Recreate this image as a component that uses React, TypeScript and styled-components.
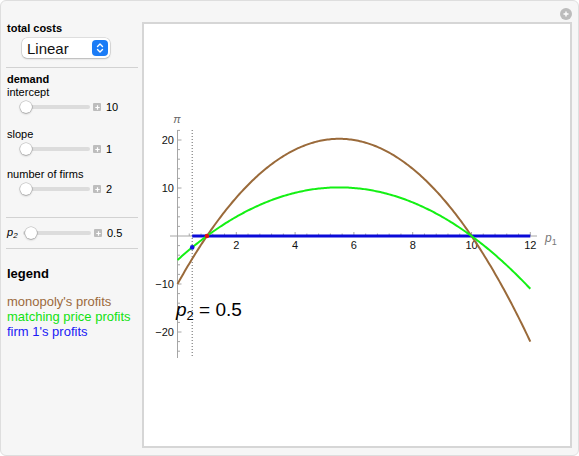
import styled, { createGlobalStyle } from 'styled-components';

const GlobalStyle = createGlobalStyle`
  html, body {
    margin: 0;
    padding: 0;
    background: #ffffff;
  }
  body {
    font-family: 'Liberation Sans', Arial, sans-serif;
  }
`;

const Frame = styled.div`
  position: relative;
  box-sizing: border-box;
  width: 579px;
  height: 456px;
  display: flex;
  align-items: flex-start;
  padding: 21px 0 0 5px;
  border: 1px solid #dedede;
  border-radius: 6px;
  background: #f6f6f6;
`;

const Sidebar = styled.div`
  width: 132px;
  display: flex;
  flex-direction: column;
  color: #000;
`;

const ControlTitle = styled.div<{ $size?: number; $gap?: number }>`
  font-weight: bold;
  font-size: ${(p) => p.$size ?? 11}px;
  line-height: ${(p) => (p.$size ? p.$size + 3 : 13)}px;
  margin-top: ${(p) => p.$gap ?? 0}px;
  padding-left: 1px;
`;

const ControlLabel = styled.div<{ $gap?: number }>`
  font-size: 11px;
  line-height: 13px;
  margin-top: ${(p) => p.$gap ?? 0}px;
  padding-left: 1px;
`;

const Popup = styled.div`
  margin: 3px 0 0 16px;
  width: 88px;
  height: 20px;
  box-sizing: border-box;
  display: flex;
  align-items: center;
  justify-content: space-between;
  padding: 0 2px 0 5px;
  background: #fff;
  border-radius: 5px;
  box-shadow: 0 0 0 0.5px rgba(0, 0, 0, 0.18), 0 1px 2px rgba(0, 0, 0, 0.18);
  font-size: 15px;
  color: #111;
`;

const Stepper = styled.div`
  width: 16px;
  height: 16px;
  border-radius: 4px;
  background: #1b7cf6;
  display: flex;
  align-items: center;
  justify-content: center;
`;

const Divider = styled.div<{ $gap: number }>`
  height: 1px;
  margin-top: ${(p) => p.$gap}px;
  background: #d2d2d2;
`;

const SliderRow = styled.div<{ $indent?: number; $gap?: number }>`
  height: 16px;
  display: flex;
  align-items: center;
  margin-top: ${(p) => p.$gap ?? 0}px;
  padding-left: ${(p) => p.$indent ?? 14}px;
  font-size: 11px;
`;

const RowSymbol = styled.span`
  width: 16px;
  padding-left: 1px;
  font-style: italic;
  font-size: 11px;
  sub {
    font-size: 8px;
    vertical-align: -2px;
  }
`;

const Track = styled.div<{ $width: number }>`
  position: relative;
  width: ${(p) => p.$width}px;
  height: 4px;
  border-radius: 2px;
  background: #dcdcdc;
`;

const Thumb = styled.div`
  position: absolute;
  top: -4px;
  width: 12px;
  height: 12px;
  box-sizing: border-box;
  border-radius: 50%;
  background: #fff;
  box-shadow: 0 0 0 0.5px rgba(0, 0, 0, 0.25), 0 1px 2px rgba(0, 0, 0, 0.25);
`;

const PlusBox = styled.div`
  width: 8px;
  height: 8px;
  margin-left: 3px;
  border-radius: 1px;
  background: #bdbdbd;
  display: flex;
  align-items: center;
  justify-content: center;
`;

const Value = styled.span`
  margin-left: 5px;
  font-size: 11px;
`;

const LegendItem = styled.div<{ $color: string; $gap?: number }>`
  font-size: 13px;
  line-height: 15px;
  padding-left: 1px;
  margin-top: ${(p) => p.$gap ?? 0}px;
  color: ${(p) => p.$color};
`;

const PlotPanel = styled.div`
  margin-left: 4px;
  width: 430px;
  height: 426px;
  box-sizing: border-box;
  border: 2px solid #d6d6d6;
  background: #fff;
  svg {
    display: block;
  }
`;

const CornerButton = styled.div`
  position: absolute;
  top: 7px;
  right: 6px;
  width: 12px;
  height: 12px;
  border-radius: 50%;
  background: #bcbcbc;
  display: flex;
  align-items: center;
  justify-content: center;
`;

const PlusGlyph = ({ size, color }: { size: number; color: string }) => (
  <svg width={size} height={size} viewBox="0 0 8 8">
    <path d="M4 1.5v5M1.5 4h5" stroke={color} strokeWidth="1.4" />
  </svg>
);

const Slider = ({
  value,
  indent,
  width = 70,
  pct,
  gap,
  symbol,
}: {
  value: string;
  indent?: number;
  width?: number;
  pct: number;
  gap?: number;
  symbol?: boolean;
}) => (
  <SliderRow $indent={indent} $gap={gap}>
    {symbol && (
      <RowSymbol>
        p<sub>2</sub>
      </RowSymbol>
    )}
    <Track $width={width}>
      <Thumb style={{ left: pct * (width - 12) }} />
    </Track>
    <PlusBox>
      <PlusGlyph size={7} color="#fff" />
    </PlusBox>
    <Value>{value}</Value>
  </SliderRow>
);

// plot mapping (page coordinates)
const X = (p: number) => 177.5 + p * 29.4;
const Y = (v: number) => 236 - v * 4.8;

const curve = (f: (p: number) => number) => {
  const pts: string[] = [];
  for (let i = 0; i <= 240; i++) {
    const p = i / 20;
    pts.push(`${X(p).toFixed(2)},${Y(f(p)).toFixed(2)}`);
  }
  return 'M' + pts.join('L');
};

const monopoly = (p: number) => (p - 1) * (10 - p);
const matching = (p: number) => monopoly(p) / 2;

const Chart = () => {
  const xMinor: number[] = [];
  for (let i = 1; i <= 30; i++) if (i % 5 !== 0) xMinor.push(i * 0.4);
  const yMinor: number[] = [];
  for (let v = -24; v <= 22; v += 2) if (v % 10 !== 0) yMinor.push(v);
  const axis = '#a6a6a6';
  return (
    <svg width={426} height={422} viewBox="144 24 426 422" fontFamily="'Liberation Sans', Arial, sans-serif">
      {/* axes */}
      <line x1={170} y1={236} x2={537} y2={236} stroke={axis} strokeWidth={1} />
      <line x1={177.5} y1={130} x2={177.5} y2={358} stroke={axis} strokeWidth={1} />
      {xMinor.map((p) => (
        <line key={`xm${p}`} x1={X(p)} y1={236} x2={X(p)} y2={233.5} stroke={axis} />
      ))}
      {[2, 4, 6, 8, 10, 12].map((p) => (
        <g key={`xM${p}`}>
          <line x1={X(p)} y1={236} x2={X(p)} y2={232} stroke={axis} />
          <text x={X(p)} y={249} fontSize={11} textAnchor="middle" fill="#111">
            {p}
          </text>
        </g>
      ))}
      {yMinor.map((v) => (
        <line key={`ym${v}`} x1={177.5} y1={Y(v)} x2={180} y2={Y(v)} stroke={axis} />
      ))}
      {[-20, -10, 10, 20].map((v) => (
        <g key={`yM${v}`}>
          <line x1={177.5} y1={Y(v)} x2={181.5} y2={Y(v)} stroke={axis} />
          <text x={174} y={Y(v) + 4} fontSize={11} textAnchor="end" fill="#111">
            {v < 0 ? `\u2212${-v}` : v}
          </text>
        </g>
      ))}
      <text x={177} y={123} fontSize={11} fontStyle="italic" textAnchor="middle" fill="#666">
        π
      </text>
      <text x={545} y={242} fontSize={12} fontStyle="italic" fill="#777">
        p
        <tspan fontSize={9} dy={3} fontStyle="normal">
          1
        </tspan>
      </text>

      {/* price marker */}
      <line x1={X(0.5)} y1={130} x2={X(0.5)} y2={358} stroke="#666" strokeWidth={1} strokeDasharray="1 2" />

      {/* curves */}
      <line x1={X(0.5)} y1={236} x2={X(12)} y2={236} stroke="#0a0ad8" strokeWidth={3} />
      <path d={curve(monopoly)} fill="none" stroke="#9a6a3a" strokeWidth={2} />
      <path d={curve(matching)} fill="none" stroke="#14f014" strokeWidth={2} />
      <circle cx={X(0.5)} cy={Y(matching(0.5))} r={2.3} fill="#1010e0" />
      <circle cx={X(1)} cy={Y(0)} r={2.3} fill="#e01010" />

      <text x={176} y={316} fontSize={19} fill="#000">
        <tspan fontStyle="italic">p</tspan>
        <tspan fontSize={13} dy={4}>
          2
        </tspan>
        <tspan dy={-4}> = 0.5</tspan>
      </text>
    </svg>
  );
};

export default function App() {
  return (
    <>
      <GlobalStyle />
      <Frame>
        <Sidebar>
          <ControlTitle>total costs</ControlTitle>
          <Popup>
            <span>Linear</span>
            <Stepper>
              <svg width="10" height="12" viewBox="0 0 10 12">
                <path d="M2.5 4.5L5 2l2.5 2.5M2.5 7.5L5 10l2.5-2.5" fill="none" stroke="#fff" strokeWidth="1.4" strokeLinecap="round" strokeLinejoin="round" />
              </svg>
            </Stepper>
          </Popup>
          <Divider $gap={9} />
          <ControlTitle $gap={5}>demand</ControlTitle>
          <ControlLabel>intercept</ControlLabel>
          <Slider value="10" pct={0} />
          <ControlLabel $gap={13}>slope</ControlLabel>
          <Slider value="1" pct={0} />
          <ControlLabel $gap={11}>number of firms</ControlLabel>
          <Slider value="2" pct={0} />
          <Divider $gap={20} />
          <Slider value="0.5" pct={0.03} indent={0} width={68} gap={7} symbol />
          <Divider $gap={7} />
          <ControlTitle $size={13} $gap={17}>
            legend
          </ControlTitle>
          <LegendItem $color="#9c6a3c" $gap={12}>
            monopoly's profits
          </LegendItem>
          <LegendItem $color="#12e212">matching price profits</LegendItem>
          <LegendItem $color="#1a1af5">firm 1's profits</LegendItem>
        </Sidebar>
        <PlotPanel>
          <Chart />
        </PlotPanel>
        <CornerButton>
          <PlusGlyph size={8} color="#fff" />
        </CornerButton>
      </Frame>
    </>
  );
}
